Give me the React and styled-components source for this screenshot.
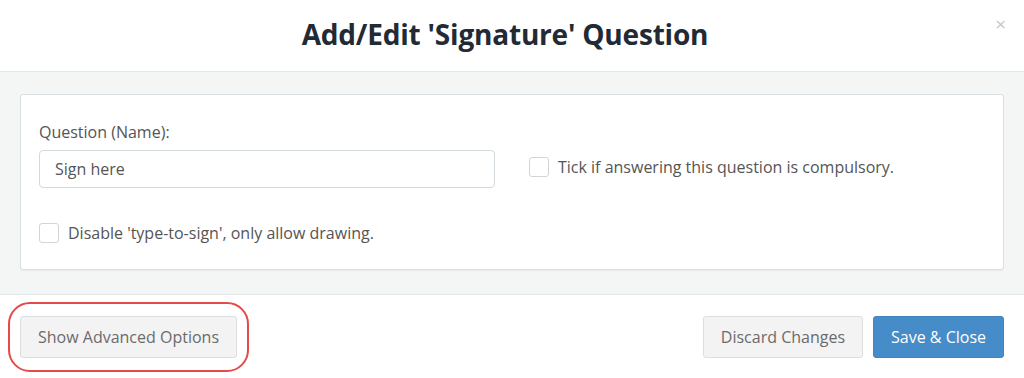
import React from "react";
import styled, { createGlobalStyle } from "styled-components";

const Global = createGlobalStyle`
  html, body { margin: 0; padding: 0; background: #fff; }
  body { font-family: "Open Sans", "Noto Sans", sans-serif; }
  * { box-sizing: border-box; }
`;

const Modal = styled.div`
  width: 1024px;
  height: 378px;
  background: #fff;
  display: flex;
  flex-direction: column;
`;

const Header = styled.header`
  position: relative;
  height: 72px;
  padding: 0 14px 3px 0;
  border-bottom: 1px solid #e3e7e9;
  display: flex;
  align-items: center;
  justify-content: center;
`;

const Title = styled.h1`
  margin: 0;
  font-size: 28px;
  font-weight: 700;
  color: #222a35;
  letter-spacing: -0.2px;
`;

const Close = styled.button`
  position: absolute;
  right: 18px;
  top: 14px;
  border: none;
  background: none;
  padding: 0;
  color: #c4c7c9;
  font-family: "Open Sans", sans-serif;
  font-size: 19px;
  line-height: 20px;
  cursor: pointer;
`;

const Body = styled.main`
  background: #f4f6f6;
  padding: 22px 20px 24px;
  border-bottom: 1px solid #e1e6e8;
`;

const Card = styled.section`
  background: #fff;
  border: 1px solid #d9e0e3;
  border-radius: 3px;
  box-shadow: 0 1px 1px rgba(0, 0, 0, 0.04);
  padding: 27px 18px 26px;
  display: grid;
  grid-template-columns: 456px 1fr;
  column-gap: 34px;
`;

const Label = styled.label`
  grid-column: 1;
  font-size: 16px;
  line-height: 20px;
  color: #555;
  margin-bottom: 8px;
`;

const Input = styled.input`
  grid-column: 1;
  height: 38px;
  border: 1px solid #d3dadd;
  border-radius: 4px;
  padding: 0 15px;
  font-family: "Open Sans", sans-serif;
  font-size: 16px;
  color: #555;
  outline: none;
`;

const Check = styled.label`
  display: flex;
  align-items: center;
  gap: 9px;
  font-size: 16px;
  line-height: 20px;
  color: #555;
  grid-column: ${(p) => p.$col};
  align-self: center;
  margin-top: ${(p) => p.$mt || 0}px;
`;

const Box = styled.span`
  width: 20px;
  height: 20px;
  border: 1px solid #cfd5d8;
  border-radius: 3px;
  background: #fff;
  flex: none;
`;

const Footer = styled.footer`
  flex: 1;
  display: flex;
  align-items: flex-start;
  padding: 21px 20px 0;
  gap: 10px;
`;

const Spacer = styled.div`
  flex: 1;
`;

const Button = styled.button`
  height: 42px;
  padding: 0 ${(p) => p.$px || 17}px;
  border-radius: 3px;
  border: 1px solid ${(p) => (p.$primary ? "#3f83bf" : "#dcdfe0")};
  background: ${(p) => (p.$primary ? "#468cc8" : "#f3f3f3")};
  color: ${(p) => (p.$primary ? "#fff" : "#6b6b6b")};
  font-family: "Open Sans", sans-serif;
  font-size: 16px;
  cursor: pointer;
`;

const Highlight = styled.div`
  position: relative;
  &::after {
    content: "";
    position: absolute;
    left: -12px;
    right: -12px;
    top: -14px;
    bottom: -14px;
    border: 2px solid #e34a4a;
    border-radius: 22px;
    pointer-events: none;
  }
`;

export default function App() {
  return (
    <Modal>
      <Global />
      <Header>
        <Title>Add/Edit 'Signature' Question</Title>
        <Close aria-label="Close">×</Close>
      </Header>
      <Body>
        <Card>
          <Label>Question (Name):</Label>
          <Spacer />
          <Input defaultValue="Sign here" />
          <Check $col={2} $mt={-4}>
            <Box />
            Tick if answering this question is compulsory.
          </Check>
          <Check $col={1} $mt={35}>
            <Box />
            Disable 'type-to-sign', only allow drawing.
          </Check>
        </Card>
      </Body>
      <Footer>
        <Highlight>
          <Button $px={17}>Show Advanced Options</Button>
        </Highlight>
        <Spacer />
        <Button>Discard Changes</Button>
        <Button $primary>Save &amp; Close</Button>
      </Footer>
    </Modal>
  );
}
